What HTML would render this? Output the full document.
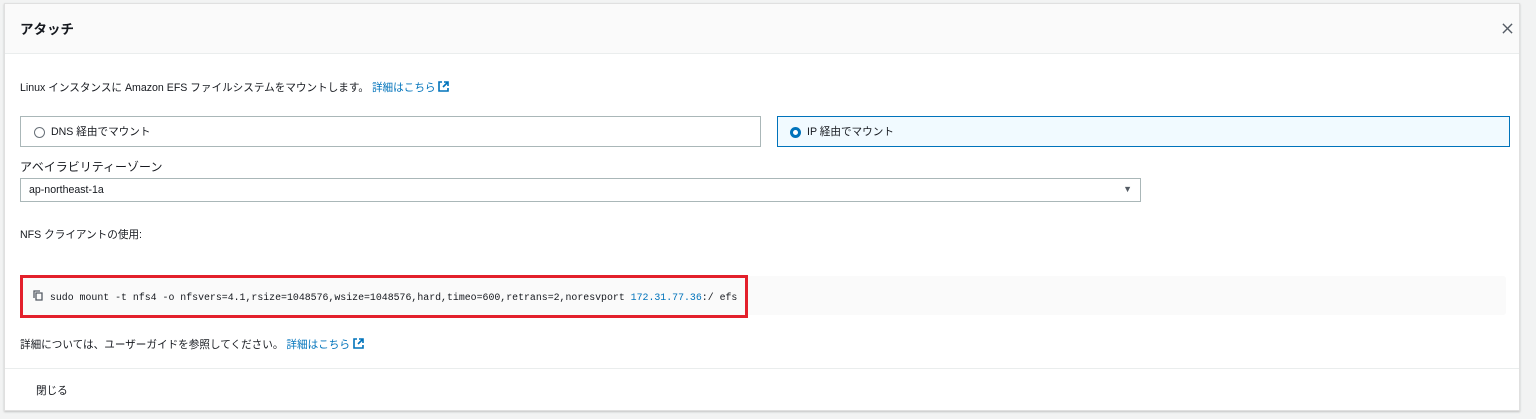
<!DOCTYPE html>
<html><head><meta charset="utf-8"><style>
*{box-sizing:border-box;margin:0;padding:0}
body{width:1536px;height:419px;background:#f2f3f3;position:relative;overflow:hidden;font-family:"Liberation Sans","Noto Sans CJK JP",sans-serif;font-size:10.6px;color:#16191f}
.m{position:absolute;left:4px;top:3px;width:1516px;height:408px;background:#fff;border:1px solid #e0e0e0;box-shadow:0 1px 2px rgba(0,0,0,.2)}
.hd{position:absolute;left:0;top:0;right:0;height:50px;background:#fafafa;border-bottom:1px solid #eaeded}
.t{position:absolute;left:15px;top:14px;font-size:13.5px;font-weight:bold}
.x{position:absolute;right:6px;top:19px}
.a{position:absolute;white-space:nowrap}
.l{color:#0073bb}
.box{position:absolute;border:1px solid #aab7b8;height:31px}
.r{position:absolute;width:11px;height:11px;border-radius:50%;border:1px solid #687078;background:#fff}
.code{position:absolute;left:16px;top:272px;width:1485px;height:39px;background:#fafafa;border-radius:3px}
.red{position:absolute;left:15px;top:271px;width:728px;height:43px;border:3px solid #e3202b}
.mono{font-family:"Liberation Mono","DejaVu Sans Mono",monospace;font-size:9.9px}
.ft{position:absolute;left:0;right:0;top:364px;border-top:1px solid #eaeded}
</style></head><body>
<div class="m">
<div class="hd"><div class="t">アタッチ</div><svg class="x" width="11" height="11" viewBox="0 0 12 12"><path d="M1 1l10 10M11 1L1 11" stroke="#545b64" stroke-width="1.5"/></svg></div>
<div class="a" style="left:15px;top:76px">Linux インスタンスに Amazon EFS ファイルシステムをマウントします。 <span class="l">詳細はこちら</span> <svg width="11" height="11" viewBox="0 0 11 11" style="vertical-align:-1px"><path d="M4 1H1v9h9V7M6 1h4v4M10 1L5 6" stroke="#0073bb" stroke-width="1.6" fill="none"/></svg></div>
<div class="box" style="left:15px;top:112px;width:741px"><div class="r" style="left:13px;top:10px"></div><div class="a" style="left:30px;top:7px">DNS 経由でマウント</div></div>
<div class="box" style="left:772px;top:112px;width:733px;border-color:#0073bb;background:#f1faff"><div class="r" style="left:12px;top:10px;border:3.5px solid #0073bb"></div><div class="a" style="left:29px;top:7px">IP 経由でマウント</div></div>
<div class="a" style="left:15px;top:154px;font-size:12px">アベイラビリティーゾーン</div>
<div class="box" style="left:15px;top:174px;width:1121px;height:24px;border-color:#aab7b8"><div class="a" style="left:8px;top:5px">ap-northeast-1a</div><div class="a" style="right:8px;top:5px;font-size:9px;color:#545b64">▼</div></div>
<div class="a" style="left:15px;top:223px">NFS クライアントの使用:</div>
<div class="code"></div>
<div class="red"></div>
<div class="a mono" style="left:28px;top:286px"><svg width="11" height="11" viewBox="0 0 11 11" style="vertical-align:-1px"><path d="M3 3h6v7H3zM1 8V1h6" stroke="#545b64" stroke-width="1.3" fill="none"/></svg> sudo mount -t nfs4 -o nfsvers=4.1,rsize=1048576,wsize=1048576,hard,timeo=600,retrans=2,noresvport <span class="l">172.31.77.36</span>:/ efs</div>
<div class="a" style="left:15px;top:333px">詳細については、ユーザーガイドを参照してください。 <span class="l">詳細はこちら</span> <svg width="11" height="11" viewBox="0 0 11 11" style="vertical-align:-1px"><path d="M4 1H1v9h9V7M6 1h4v4M10 1L5 6" stroke="#0073bb" stroke-width="1.6" fill="none"/></svg></div>
<div class="ft"></div>
<div class="a" style="left:31px;top:379px">閉じる</div>
</div>
</body></html>
